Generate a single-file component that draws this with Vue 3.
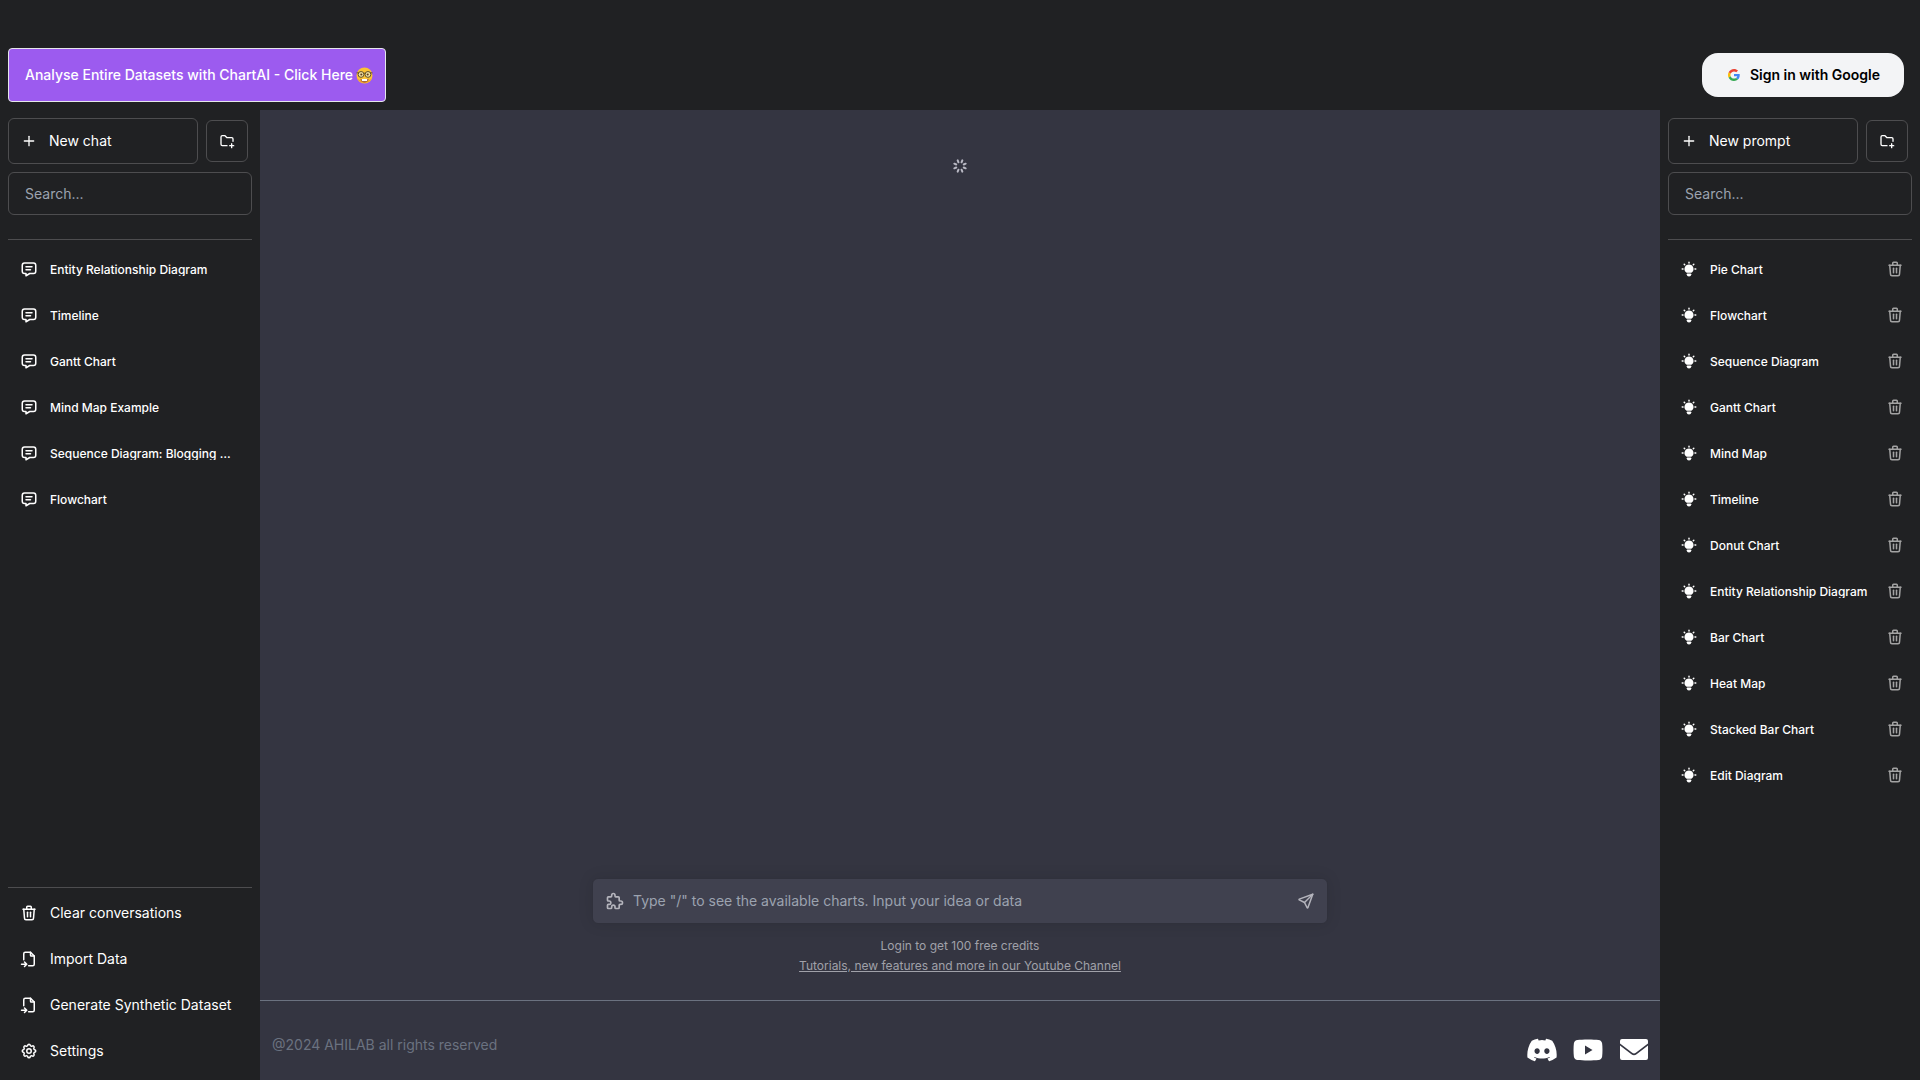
<script setup>
import { ref } from 'vue'

const icons = {
    plus: ['M12 5v14', 'M5 12h14'],
    folderPlus: ['M12 19h-7a2 2 0 0 1 -2 -2v-11a2 2 0 0 1 2 -2h4l3 3h7a2 2 0 0 1 2 2v3.5', 'M16 19h6', 'M19 16v6'],
    message: [
        'M8 9h8',
        'M8 13h6',
        'M18 4a3 3 0 0 1 3 3v8a3 3 0 0 1 -3 3h-5l-5 3v-3h-2a3 3 0 0 1 -3 -3v-8a3 3 0 0 1 3 -3h12z'
    ],
    trash: [
        'M4 7h16',
        'M10 11v6',
        'M14 11v6',
        'M5 7l1 12a2 2 0 0 0 2 2h8a2 2 0 0 0 2 -2l1 -12',
        'M9 7v-3a1 1 0 0 1 1 -1h4a1 1 0 0 1 1 1v3'
    ],
    fileImport: [
        'M14 3v4a1 1 0 0 0 1 1h4',
        'M5 13v-8a2 2 0 0 1 2 -2h7l5 5v11a2 2 0 0 1 -2 2h-5.5m-9.5 -2h7m-3 -3l3 3l-3 3'
    ],
    settings: [
        'M10.325 4.317c.426 -1.756 2.924 -1.756 3.35 0a1.724 1.724 0 0 0 2.573 1.066c1.543 -.94 3.31 .826 2.37 2.37a1.724 1.724 0 0 0 1.065 2.572c1.756 .426 1.756 2.924 0 3.35a1.724 1.724 0 0 0 -1.066 2.573c.94 1.543 -.826 3.31 -2.37 2.37a1.724 1.724 0 0 0 -2.572 1.065c-.426 1.756 -2.924 1.756 -3.35 0a1.724 1.724 0 0 0 -2.573 -1.066c-1.543 .94 -3.31 -.826 -2.37 -2.37a1.724 1.724 0 0 0 -1.065 -2.572c-1.756 -.426 -1.756 -2.924 0 -3.35a1.724 1.724 0 0 0 1.066 -2.573c-.94 -1.543 .826 -3.31 2.37 -2.37c1 .608 2.296 .07 2.572 -1.065z',
        'M9 12a3 3 0 1 0 6 0a3 3 0 0 0 -6 0'
    ]
}

const conversations = [
    'Entity Relationship Diagram',
    'Timeline',
    'Gantt Chart',
    'Mind Map Example',
    'Sequence Diagram: Blogging app service communication',
    'Flowchart'
]

const actions = [
    { label: 'Clear conversations', icon: 'trash' },
    { label: 'Import Data', icon: 'fileImport' },
    { label: 'Generate Synthetic Dataset', icon: 'fileImport' },
    { label: 'Settings', icon: 'settings' }
]

const prompts = ref([
    'Pie Chart',
    'Flowchart',
    'Sequence Diagram',
    'Gantt Chart',
    'Mind Map',
    'Timeline',
    'Donut Chart',
    'Entity Relationship Diagram',
    'Bar Chart',
    'Heat Map',
    'Stacked Bar Chart',
    'Edit Diagram'
])

const chatSearch = ref('')
const promptSearch = ref('')
const message = ref('')

function removePrompt(index) {
    prompts.value.splice(index, 1)
}
</script>

<template>
    <div class="app">
        <header class="topbar">
            <a class="banner" href="#">
                Analyse Entire Datasets with ChartAI - Click Here
                <svg class="emoji" viewBox="0 0 32 32" aria-hidden="true">
                    <circle cx="16" cy="16" r="15" fill="#fbc334" />
                    <path d="M2 20a15 15 0 0 0 28 0a17 17 0 0 1 -28 0z" fill="#ef9a2b" />
                    <path d="M8 22c5 2 11 2 16 0c-1 5-4 7-8 7s-7-2-8-7z" fill="#a8602a" />
                    <path d="M11 22.500h10v4h-10z" fill="#fff" />
                    <circle cx="9.500" cy="14" r="5.500" fill="#efe0a0" stroke="#5c4a22" stroke-width="1.800" />
                    <circle cx="22.500" cy="14" r="5.500" fill="#efe0a0" stroke="#5c4a22" stroke-width="1.800" />
                    <path d="M1 11h4M27 11h4M14 12.500q2-1.500 4 0" fill="none" stroke="#5c4a22" stroke-width="1.800" />
                    <circle cx="10" cy="14" r="2" fill="#5b3a1a" />
                    <circle cx="22" cy="14" r="2" fill="#5b3a1a" />
                </svg>
            </a>
            <button class="sign-in" type="button">
                <svg class="google" viewBox="0 0 48 48" aria-hidden="true">
                    <path fill="#ea4335" d="M24 9.500c3.540 0 6.710 1.220 9.210 3.600l6.850-6.850C35.900 2.380 30.470 0 24 0 14.620 0 6.510 5.380 2.560 13.220l7.980 6.190C12.430 13.720 17.740 9.500 24 9.500z" />
                    <path fill="#4285f4" d="M46.980 24.550c0-1.570-.15-3.090-.38-4.550H24v9.020h12.940c-.58 2.960-2.260 5.480-4.780 7.180l7.730 6c4.510-4.180 7.090-10.360 7.090-17.650z" />
                    <path fill="#fbbc05" d="M10.530 28.590c-.48-1.450-.76-2.990-.76-4.590s.27-3.140.76-4.590l-7.980-6.190C.92 16.460 0 20.120 0 24c0 3.880.92 7.540 2.560 10.780l7.970-6.190z" />
                    <path fill="#34a853" d="M24 48c6.480 0 11.930-2.130 15.890-5.810l-7.730-6c-2.150 1.450-4.920 2.300-8.160 2.300-6.260 0-11.570-4.220-13.470-9.910l-7.980 6.190C6.510 42.620 14.620 48 24 48z" />
                </svg>
                Sign in with Google
            </button>
        </header>

        <div class="body">
            <!-- Conversations -->
            <aside class="sidebar">
                <div class="new-row">
                    <button class="new-btn" type="button">
                        <svg class="icon small" viewBox="0 0 24 24"><path v-for="d in icons.plus" :key="d" :d="d" /></svg>
                        New chat
                    </button>
                    <button class="folder-btn" type="button" aria-label="New folder">
                        <svg class="icon small" viewBox="0 0 24 24"><path v-for="d in icons.folderPlus" :key="d" :d="d" /></svg>
                    </button>
                </div>
                <input v-model="chatSearch" class="search" type="text" placeholder="Search..." aria-label="Search conversations" />
                <nav class="list">
                    <button v-for="name in conversations" :key="name" class="row" type="button">
                        <svg class="icon" viewBox="0 0 24 24"><path v-for="d in icons.message" :key="d" :d="d" /></svg>
                        <span class="row-name">{{ name }}</span>
                    </button>
                </nav>
                <div class="actions">
                    <button v-for="action in actions" :key="action.label" class="row" type="button">
                        <svg class="icon" viewBox="0 0 24 24"><path v-for="d in icons[action.icon]" :key="d" :d="d" /></svg>
                        <span>{{ action.label }}</span>
                    </button>
                </div>
            </aside>

            <!-- Chat -->
            <main class="chat">
                <div class="conversation">
                    <svg class="spinner" viewBox="0 0 24 24" aria-label="Loading">
                        <path d="M14.300 6.400l1.200-2.900M17.600 9.700l2.900-1.200M17.600 14.300l2.900 1.200M14.300 17.600l1.200 2.900M9.700 17.600l-1.200 2.900M6.400 14.300l-2.900 1.200M6.400 9.700l-2.900-1.200M9.700 6.400l-1.200-2.900" />
                    </svg>
                </div>

                <div class="composer">
                    <div class="composer-box">
                        <button class="tool-btn" type="button" aria-label="Plugins">
                            <svg class="icon large" viewBox="0 0 24 24">
                                <path d="M4 7h3a1 1 0 0 0 1 -1v-1a2 2 0 0 1 4 0v1a1 1 0 0 0 1 1h3a1 1 0 0 1 1 1v3a1 1 0 0 0 1 1h1a2 2 0 0 1 0 4h-1a1 1 0 0 0 -1 1v3a1 1 0 0 1 -1 1h-3a1 1 0 0 1 -1 -1v-1a2 2 0 0 0 -4 0v1a1 1 0 0 1 -1 1h-3a1 1 0 0 1 -1 -1v-3a1 1 0 0 1 1 -1h1a2 2 0 0 0 0 -4h-1a1 1 0 0 1 -1 -1v-3a1 1 0 0 1 1 -1" />
                            </svg>
                        </button>
                        <textarea v-model="message" rows="1" aria-label="Message"
                            placeholder="Type &quot;/&quot; to see the available charts. Input your idea or data"></textarea>
                        <button class="tool-btn" type="button" aria-label="Send">
                            <svg class="icon" viewBox="0 0 24 24">
                                <path d="M10 14l11 -11" />
                                <path d="M21 3l-6.500 18a.55 .55 0 0 1 -1 0l-3.500 -7l-7 -3.500a.55 .55 0 0 1 0 -1l18 -6.500" />
                            </svg>
                        </button>
                    </div>
                    <p class="hint">Login to get 100 free credits</p>
                    <p class="hint"><a href="#">Tutorials, new features and more in our Youtube Channel</a></p>
                </div>

                <footer class="footer">
                    <span class="copyright">@2024 AHILAB all rights reserved</span>
                    <div class="socials">
                        <a href="#" aria-label="Discord">
                            <svg viewBox="20 16 600 480">
                                <path d="M524.531,69.836a1.5,1.5,0,0,0-.764-.7A485.065,485.065,0,0,0,404.081,32.03a1.816,1.816,0,0,0-1.923.91,337.461,337.461,0,0,0-14.9,30.6,447.848,447.848,0,0,0-134.426,0,309.541,309.541,0,0,0-15.135-30.6,1.89,1.89,0,0,0-1.924-.91A483.689,483.689,0,0,0,116.085,69.137a1.712,1.712,0,0,0-.788.676C39.068,183.651,18.186,294.69,28.43,404.354a2.016,2.016,0,0,0,.765,1.375A487.666,487.666,0,0,0,176.02,479.918a1.9,1.9,0,0,0,2.063-.676A348.2,348.2,0,0,0,208.12,430.4a1.86,1.86,0,0,0-1.019-2.588,321.173,321.173,0,0,1-45.868-21.853,1.885,1.885,0,0,1-.185-3.126c3.082-2.309,6.166-4.711,9.109-7.137a1.819,1.819,0,0,1,1.9-.256c96.229,43.917,200.41,43.917,295.5,0a1.812,1.812,0,0,1,1.924.233c2.944,2.426,6.027,4.851,9.132,7.16a1.884,1.884,0,0,1-.162,3.126,301.407,301.407,0,0,1-45.89,21.83,1.875,1.875,0,0,0-1,2.611,391.055,391.055,0,0,0,30.014,48.815,1.864,1.864,0,0,0,2.063.7A486.048,486.048,0,0,0,610.7,405.729a1.882,1.882,0,0,0,.765-1.352C623.729,277.594,590.933,167.465,524.531,69.836ZM222.491,337.58c-28.972,0-52.844-26.587-52.844-59.239S193.056,219.1,222.491,219.1c29.665,0,53.306,26.82,52.843,59.239C275.334,310.993,251.924,337.58,222.491,337.58Zm195.38,0c-28.971,0-52.843-26.587-52.843-59.239S388.437,219.1,417.871,219.1c29.667,0,53.307,26.82,52.844,59.239C470.715,310.993,447.538,337.58,417.871,337.58Z" />
                            </svg>
                        </a>
                        <a href="#" aria-label="Youtube">
                            <svg viewBox="0 0 30 24">
                                <path d="M15 1.500c4.500 0 8 .2 10.500.5 2 .2 3.200 1.400 3.600 3.300.5 3.500.5 9.900 0 13.400-.4 1.900-1.600 3.100-3.600 3.300-5 .6-16 .6-21 0-2-.2-3.200-1.400-3.600-3.300-.5-3.500-.5-9.900 0-13.400.4-1.900 1.600-3.100 3.600-3.300 2.500-.3 6-.5 10.500-.5zM12 7.500v9l7.500-4.500z" />
                            </svg>
                        </a>
                        <a href="#" aria-label="Email">
                            <svg viewBox="0 0 30 24">
                                <path d="M3 1h24a2 2 0 0 1 2 2v2.500l-12.200 9.200a3 3 0 0 1-3.600 0L1 5.500V3a2 2 0 0 1 2-2z" />
                                <path d="M1 7.500l11.400 8.700a4.300 4.300 0 0 0 5.200 0L29 7.500V20a2 2 0 0 1-2 2H3a2 2 0 0 1-2-2z" />
                            </svg>
                        </a>
                    </div>
                </footer>
            </main>

            <!-- Prompts -->
            <aside class="sidebar">
                <div class="new-row">
                    <button class="new-btn" type="button">
                        <svg class="icon small" viewBox="0 0 24 24"><path v-for="d in icons.plus" :key="d" :d="d" /></svg>
                        New prompt
                    </button>
                    <button class="folder-btn" type="button" aria-label="New folder">
                        <svg class="icon small" viewBox="0 0 24 24"><path v-for="d in icons.folderPlus" :key="d" :d="d" /></svg>
                    </button>
                </div>
                <input v-model="promptSearch" class="search" type="text" placeholder="Search..." aria-label="Search prompts" />
                <div class="list">
                    <div v-for="(name, index) in prompts" :key="name" class="prompt">
                        <button class="row" type="button">
                            <svg class="icon filled" viewBox="0 0 24 24">
                                <path d="M4 11a1 1 0 0 1 .117 1.993l-.117 .007h-1a1 1 0 0 1 -.117 -1.993l.117 -.007h1z" />
                                <path d="M12 2a1 1 0 0 1 .993 .883l.007 .117v1a1 1 0 0 1 -1.993 .117l-.007 -.117v-1a1 1 0 0 1 1 -1z" />
                                <path d="M21 11a1 1 0 0 1 .117 1.993l-.117 .007h-1a1 1 0 0 1 -.117 -1.993l.117 -.007h1z" />
                                <path d="M4.893 4.893a1 1 0 0 1 1.320 -.083l.094 .083l.7 .7a1 1 0 0 1 -1.320 1.497l-.094 -.083l-.7 -.7a1 1 0 0 1 0 -1.414z" />
                                <path d="M17.693 4.893a1 1 0 0 1 1.497 1.320l-.083 .094l-.7 .7a1 1 0 0 1 -1.497 -1.320l.083 -.094l.7 -.7z" />
                                <path d="M14 18a1 1 0 0 1 1 1a3 3 0 0 1 -6 0a1 1 0 0 1 .883 -.993l.117 -.007h4z" />
                                <path d="M12 6a6 6 0 0 1 3.600 10.800a1 1 0 0 1 -.471 .192l-.129 .008h-6a1 1 0 0 1 -.6 -.2a6 6 0 0 1 3.600 -10.800z" />
                            </svg>
                            <span class="row-name">{{ name }}</span>
                        </button>
                        <button class="delete-btn" type="button" :aria-label="'Delete ' + name" @click="removePrompt(index)">
                            <svg class="icon" viewBox="0 0 24 24"><path v-for="d in icons.trash" :key="d" :d="d" /></svg>
                        </button>
                    </div>
                </div>
            </aside>
        </div>
    </div>
</template>

<style>
body {
    margin: 0;
    background: #202123;
}
</style>

<style scoped>
.app {
    display: flex;
    flex-direction: column;
    height: 100vh;
    background: #202123;
    color: white;
    font-family: Inter, "Liberation Sans", sans-serif;
    font-size: 14px;
    line-height: 20px;
}

.app * {
    box-sizing: border-box;
}

button,
input,
textarea {
    font: inherit;
    color: inherit;
    background: none;
    border: none;
    margin: 0;
    padding: 0;
}

button {
    cursor: pointer;
}

a {
    color: inherit;
}

.icon {
    flex: none;
    width: 18px;
    height: 18px;
    fill: none;
    stroke: currentColor;
    stroke-width: 2;
    stroke-linecap: round;
    stroke-linejoin: round;
}

.icon.small {
    width: 16px;
    height: 16px;
}

.icon.large {
    width: 20px;
    height: 20px;
}

.icon.filled {
    fill: currentColor;
    stroke: none;
}

.topbar {
    display: flex;
    align-items: center;
    justify-content: space-between;
    padding: 48px 16px 8px 8px;
}

.banner {
    display: flex;
    align-items: center;
    gap: 3px;
    height: 54px;
    padding: 0 12px 0 16px;
    border: 1px solid #e5e7eb;
    border-radius: 4px;
    background: #9c5bef;
    font-weight: 500;
    text-decoration: none;
}

.emoji {
    width: 17px;
    height: 17px;
}

.sign-in {
    display: flex;
    align-items: center;
    gap: 10px;
    height: 44px;
    padding: 0 24px 0 26px;
    border-radius: 16px;
    background: #f3f4f6;
    color: black;
    font-weight: 600;
}

.google {
    width: 12px;
    height: 12px;
}

.body {
    display: flex;
    flex: 1;
    min-height: 0;
}

/* Sidebars */
.sidebar {
    display: flex;
    flex-direction: column;
    gap: 8px;
    flex: none;
    width: 260px;
    padding: 8px;
}

.new-row {
    display: flex;
    align-items: center;
    gap: 8px;
}

.new-btn {
    display: flex;
    align-items: center;
    gap: 12px;
    width: 190px;
    height: 46px;
    padding: 0 12px;
    border: 1px solid #4d4d4f;
    border-radius: 6px;
}

.folder-btn {
    display: flex;
    align-items: center;
    justify-content: center;
    width: 42px;
    height: 42px;
    border: 1px solid #4d4d4f;
    border-radius: 6px;
}

.search {
    width: 100%;
    height: 43px;
    padding: 0 16px;
    border: 1px solid #4d4d4f;
    border-radius: 6px;
}

.search::placeholder {
    color: #9ca3af;
    opacity: 1;
}

.list {
    display: flex;
    flex: 1;
    flex-direction: column;
    gap: 4px;
    min-height: 0;
    margin-top: 16px;
    padding-top: 8px;
    border-top: 1px solid #4d4d4f;
    overflow: hidden;
}

.row {
    display: flex;
    flex: none;
    align-items: center;
    gap: 12px;
    width: 100%;
    height: 42px;
    padding: 0 16px 0 12px;
    text-align: left;
}

.row-name {
    flex: 1;
    min-width: 0;
    padding-top: 2px;
    overflow: hidden;
    font-size: 12px;
    font-weight: 500;
    line-height: 12px;
    text-overflow: ellipsis;
    white-space: nowrap;
}

.actions {
    display: flex;
    flex-direction: column;
    gap: 4px;
    padding-top: 4px;
    border-top: 1px solid #4d4d4f;
}

.prompt {
    display: flex;
    flex: none;
    align-items: center;
}

.prompt .row {
    flex: 1;
    min-width: 0;
    padding-right: 0;
}

.delete-btn {
    display: flex;
    padding: 8px;
    color: #a3a3a3;
}

/* Chat */
.chat {
    display: flex;
    flex: 1;
    flex-direction: column;
    min-width: 0;
    background: #343541;
}

.conversation {
    display: flex;
    flex: 1;
    align-items: flex-start;
    justify-content: center;
    padding-top: 48px;
}

.spinner {
    width: 16px;
    height: 16px;
    fill: none;
    stroke: #b9b9c4;
    stroke-width: 3;
    stroke-linecap: round;
}

.composer {
    width: 100%;
    max-width: 736px;
    margin: 0 auto;
    padding-bottom: 24px;
}

.composer-box {
    display: flex;
    align-items: center;
    gap: 8px;
    height: 46px;
    margin-bottom: 12px;
    padding: 0 12px;
    border: 1px solid #30313c;
    border-radius: 6px;
    background: #40414f;
    box-shadow: 0 0 15px rgba(0, 0, 0, 0.1);
}

.composer-box textarea {
    flex: 1;
    min-width: 0;
    height: 20px;
    resize: none;
    overflow: hidden;
}

.composer-box textarea::placeholder {
    color: #9ca3af;
    opacity: 1;
}

.tool-btn {
    display: flex;
    color: #b4b4bc;
}

.hint {
    margin: 0;
    color: #a0a1a9;
    font-size: 12px;
    line-height: 20px;
    text-align: center;
}

.footer {
    display: flex;
    align-items: flex-start;
    justify-content: space-between;
    height: 80px;
    padding: 34px 11px 0 12px;
    border-top: 1px solid #6b7280;
}

.copyright {
    color: #6b7280;
}

.socials {
    display: flex;
    gap: 16px;
    padding-top: 3px;
}

.socials a {
    display: flex;
}

.socials svg {
    width: 30px;
    height: 24px;
    fill: white;
    fill-rule: evenodd;
}
</style>
